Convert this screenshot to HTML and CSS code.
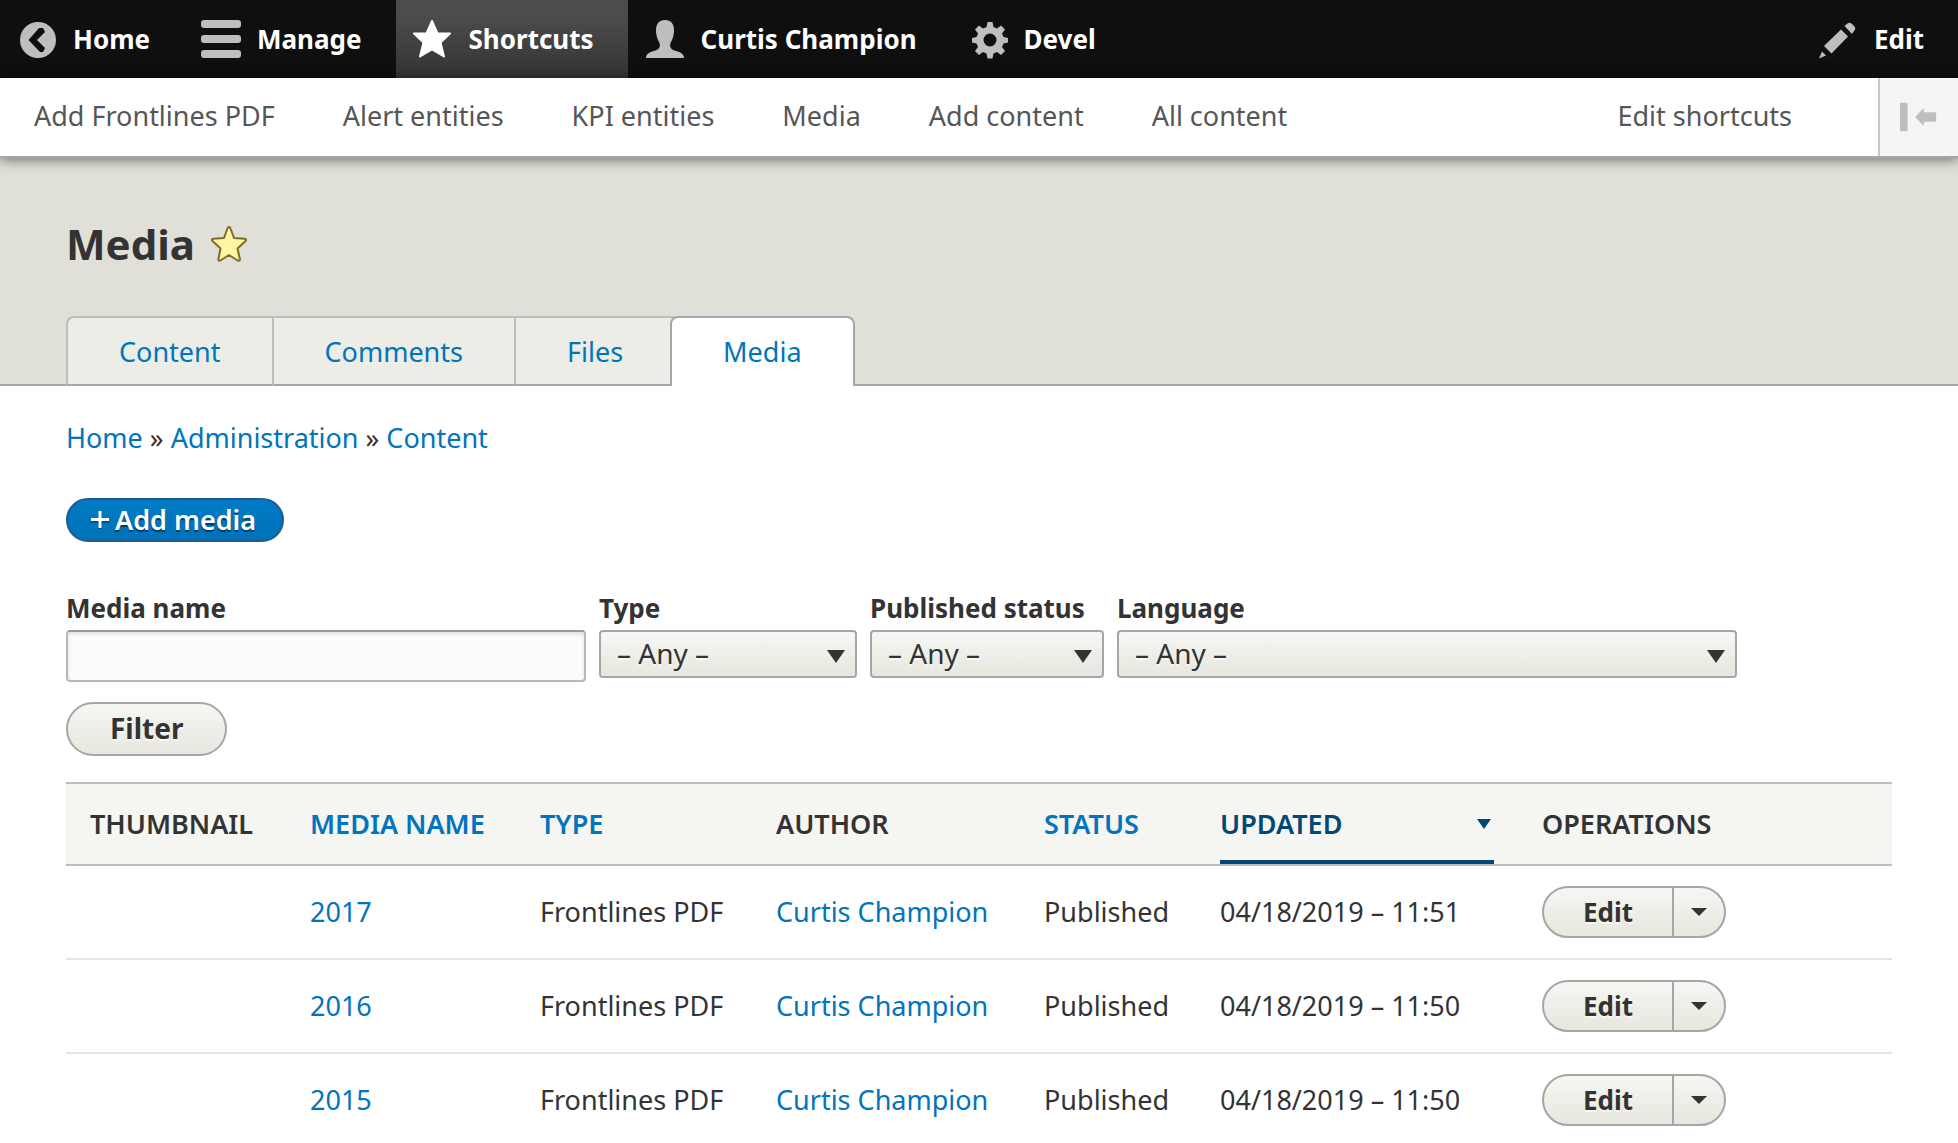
FILE: index.html
```html
<!DOCTYPE html>
<html lang="en">
<head>
<meta charset="utf-8">
<title>Media</title>
<meta name="viewport" content="width=device-width, initial-scale=1">
<link rel="stylesheet" href="styles.css">
</head>
<body>
<nav class="toolbar" aria-label="Administration toolbar">
  <a class="toolbar-tab" href="#">
    <svg class="toolbar-icon" viewBox="0 0 40 40" aria-hidden="true"><path fill="#bebebe" fill-rule="evenodd" d="M21 3a18 18 0 1 0 0 36 18 18 0 0 0 0-36zM22 9h4l2 4-8 8 8 8-2 4h-3L11.500 21z"/></svg>
    Home
  </a>
  <a class="toolbar-tab" href="#">
    <svg class="toolbar-icon" viewBox="0 0 40 40" aria-hidden="true"><g fill="#bebebe"><rect y="1" width="40" height="8" rx="3"/><rect y="16" width="40" height="8" rx="3"/><rect y="31" width="40" height="8" rx="3"/></g></svg>
    Manage
  </a>
  <a class="toolbar-tab is-active" href="#">
    <svg class="toolbar-icon" viewBox="0 0 40 40" aria-hidden="true"><path fill="#fff" stroke="#fff" stroke-width="2" stroke-linejoin="round" d="M19 2l5.500 12.500H37l-9.500 9L31 37.500l-12-7-12 7 3.500-14L1 14.500h12.500z"/></svg>
    Shortcuts
  </a>
  <a class="toolbar-tab" href="#">
    <svg class="toolbar-icon" viewBox="0 0 40 40" aria-hidden="true"><path fill="#bebebe" d="M20 1c6 0 9 4 9 10.500 0 5-1.500 9-3.500 12.500-1 3.500 0 6 4 7.500 5.500 1.500 9.500 3 9.500 7.500H1c0-4.500 4-6 9.500-7.500 4-1.500 5-4 4-7.500C12.500 20.500 11 16.500 11 11.500 11 5 14 1 20 1z"/></svg>
    Curtis Champion
  </a>
  <a class="toolbar-tab" href="#">
    <svg class="toolbar-icon" viewBox="0 0 40 40" aria-hidden="true"><path fill="#bebebe" fill-rule="evenodd" d="M19.500 3h5l1 5 3.500 1.500 4-3 4 4-3 4 1.500 3.500 4.500 1v4.500l-4.500 1L34 28l3 4-4 4-4-3-3.500 1.500-1 5h-5l-1-5L15 33l-4 3-4-4 3-4-1.500-3.500-4.500-1V19l4.500-1L10 14.500l-3-4 4-4 4 3L18.500 8zM22 14.500a6.500 6.500 0 1 0 0 13 6.500 6.500 0 0 0 0-13z"/></svg>
    Devel
  </a>
  <a class="toolbar-tab toolbar-edit" href="#">
    <svg class="toolbar-icon" viewBox="0 0 40 40" aria-hidden="true"><g fill="#bebebe" transform="translate(1 1)"><path d="M25.500 6l3-2.500c1.500-1 3-.8 4.500.5l2.500 2.500c1.200 1.500 1 3-.5 4.500L33 14z"/><path d="M22 9.500L29 16.500 12.500 33.500 5 26z"/><path d="M3 31.500l4 4L0 38.500z"/></g></svg>
    Edit
  </a>
</nav>
<nav class="tray" aria-label="Shortcuts">
  <a href="#">Add Frontlines PDF</a>
  <a href="#">Alert entities</a>
  <a href="#">KPI entities</a>
  <a href="#">Media</a>
  <a href="#">Add content</a>
  <a href="#">All content</a>
  <a class="tray-edit" href="#">Edit shortcuts</a>
  <button class="tray-toggle" type="button" aria-label="Vertical orientation">
    <svg viewBox="0 0 40 32" aria-hidden="true"><g fill="#bebebe"><rect y="1" width="8" height="30" rx="1"/><path d="M16 16l9-9.500V11h12q1 0 1 1v8q0 1-1 1H25v4.500z"/></g></svg>
  </button>
</nav>
<header class="page-header">
  <div class="title-row">
    <h1>Media</h1>
    <a class="star" href="#" aria-label="Remove from shortcuts"><svg viewBox="0 0 36 36" aria-hidden="true"><path fill="#fff6a3" stroke="#7f6c2b" stroke-width="2" stroke-linejoin="round" d="M18 1q1 0 1.500 1.500L23 12l11 .8q1.800.7.500 2.200L26.500 22.500l2.500 11q-.5 1.800-2.300 1L18 29l-8.700 5.500q-1.800.8-2-1L9.500 22.500 1.500 15q-1.300-1.500.5-2.200L13 12l3.500-9.500Q17 1 18 1z"/></svg></a>
  </div>
  <nav class="tabs" aria-label="Tabs">
    <a href="#">Content</a>
    <a href="#">Comments</a>
    <a href="#">Files</a>
    <a class="is-active" href="#">Media</a>
  </nav>
</header>
<main class="content">
  <nav class="breadcrumb" aria-label="Breadcrumb"><a href="#">Home</a> » <a href="#">Administration</a> » <a href="#">Content</a></nav>
  <a class="action" href="#"><svg viewBox="0 0 18 18" aria-hidden="true"><path d="M9 1v17M0 10h18" stroke="#000" stroke-opacity=".4" stroke-width="3"/><path d="M9 0v17M0 8.500h18" stroke="#fff" stroke-width="3"/></svg>Add media</a>
  <form class="filters">
    <div class="field field-name">
      <label for="name">Media name</label>
      <input id="name" type="text">
    </div>
    <div class="field field-type">
      <label for="type">Type</label>
      <select id="type"><option>– Any –</option></select>
    </div>
    <div class="field field-status">
      <label for="status">Published status</label>
      <select id="status"><option>– Any –</option></select>
    </div>
    <div class="field field-language">
      <label for="language">Language</label>
      <select id="language"><option>– Any –</option></select>
    </div>
    <button class="filter-button" type="button">Filter</button>
  </form>
  <table class="media-table">
    <colgroup><col class="col-thumb"><col class="col-name"><col class="col-type"><col class="col-author"><col class="col-status"><col class="col-updated"><col></colgroup>
    <thead>
      <tr>
        <th>Thumbnail</th>
        <th><a href="#">Media name</a></th>
        <th><a href="#">Type</a></th>
        <th>Author</th>
        <th><a href="#">Status</a></th>
        <th><a class="is-sorted" href="#">Updated<svg viewBox="0 0 14 10" aria-hidden="true"><path fill="#004875" d="M0 0h14L7 10z"/></svg></a></th>
        <th>Operations</th>
      </tr>
    </thead>
    <tbody>
      <tr>
        <td></td><td><a href="#">2017</a></td><td>Frontlines PDF</td><td><a href="#">Curtis Champion</a></td><td>Published</td><td>04/18/2019 – 11:51</td>
        <td><div class="dropbutton"><button type="button">Edit</button><button class="more" type="button" aria-label="More actions"><svg viewBox="0 0 16 8" aria-hidden="true"><path fill="#333" d="M0 0h16L8 8z"/></svg></button></div></td>
      </tr>
      <tr>
        <td></td><td><a href="#">2016</a></td><td>Frontlines PDF</td><td><a href="#">Curtis Champion</a></td><td>Published</td><td>04/18/2019 – 11:50</td>
        <td><div class="dropbutton"><button type="button">Edit</button><button class="more" type="button" aria-label="More actions"><svg viewBox="0 0 16 8" aria-hidden="true"><path fill="#333" d="M0 0h16L8 8z"/></svg></button></div></td>
      </tr>
      <tr>
        <td></td><td><a href="#">2015</a></td><td>Frontlines PDF</td><td><a href="#">Curtis Champion</a></td><td>Published</td><td>04/18/2019 – 11:50</td>
        <td><div class="dropbutton"><button type="button">Edit</button><button class="more" type="button" aria-label="More actions"><svg viewBox="0 0 16 8" aria-hidden="true"><path fill="#333" d="M0 0h16L8 8z"/></svg></button></div></td>
      </tr>
    </tbody>
  </table>
</main>
</body>
</html>
```
FILE: styles.css
```css
* {
  box-sizing: border-box;
}

body {
  margin: 0;
  background: #fff;
  color: #333;
  font: 27px/36px "Lucida Grande", "Noto Sans", sans-serif;
}

a {
  color: #0074bd;
  text-decoration: none;
}

button,
input,
select {
  font: inherit;
  color: inherit;
}

/* Toolbar */
.toolbar {
  display: flex;
  height: 78px;
  background: #0f0f0f;
}

.toolbar-tab {
  display: flex;
  align-items: center;
  gap: 16px;
  padding: 0 34px 0 17px;
  color: #fff;
  font-size: 26px;
  font-weight: 700;
  white-space: nowrap;
}

.toolbar-tab.is-active {
  background: linear-gradient(#4c4c4c 20%, #333);
}

.toolbar-icon {
  width: 40px;
  height: 40px;
}

.toolbar-edit {
  margin-left: auto;
}

/* Shortcut tray */
.tray {
  position: relative;
  display: flex;
  align-items: center;
  height: 80px;
  background: #fff;
  border-bottom: 2px solid #a6a6a6;
  box-shadow: 0 2px 12px rgba(0, 0, 0, 0.5);
}

.tray a {
  padding: 0 34px 2px;
  color: #565656;
  white-space: nowrap;
}

.tray .tray-edit {
  margin-left: auto;
  margin-right: 52px;
}

.tray-toggle {
  display: flex;
  align-items: center;
  align-self: stretch;
  width: 80px;
  padding: 0 20px;
  border: 0;
  border-left: 2px solid #c8c8c8;
  background: #f5f5f5;
}

.tray-toggle svg {
  width: 40px;
  height: 32px;
}

/* Page header */
.page-header {
  padding: 58px 66px 0;
  background: #e0e0d8;
  box-shadow: inset 0 -2px #a6a6a6;
}

.title-row {
  display: flex;
  align-items: center;
  gap: 16px;
}

h1 {
  margin: 0;
  font-size: 42px;
  line-height: 56px;
}

.star svg {
  display: block;
  width: 36px;
  height: 36px;
}

.tabs {
  display: flex;
  margin-top: 44px;
}

.tabs a {
  height: 70px;
  padding: 16px 51px;
  border: 2px solid #bebebe;
  border-right: 0;
  border-bottom-color: #a6a6a6;
  background: #ecede6;
}

.tabs a:first-child {
  border-top-left-radius: 8px;
}

.tabs .is-active {
  margin-left: -4px;
  border: 2px solid #a6a6a6;
  border-bottom: 0;
  border-radius: 8px 8px 0 0;
  background: #fff;
}

/* Content */
.content {
  padding: 34px 66px;
}

.action {
  display: inline-flex;
  align-items: center;
  gap: 6px;
  height: 44px;
  margin-top: 42px;
  padding: 0 26px 0 23px;
  border: 2px solid #1e5c90;
  border-radius: 22px;
  background: linear-gradient(#007bc6, #0071b8);
  color: #fff;
  font-weight: 600;
  text-shadow: 0 2px 1px rgba(0, 0, 0, 0.5);
}

.action svg {
  width: 18px;
  height: 18px;
}

.filters {
  display: flex;
  flex-wrap: wrap;
  align-items: flex-start;
  gap: 20px 13px;
  margin-top: 48px;
}

.field label {
  display: block;
  margin-bottom: 4px;
  font-size: 26px;
  font-weight: 700;
  white-space: nowrap;
}

.field input,
.field select {
  display: block;
  width: 100%;
  border-radius: 4px;
}

.field input {
  height: 52px;
  padding: 0 12px;
  border: 2px solid #b8b8b8;
  border-top-color: #999;
  background: #fcfcfa;
  box-shadow: inset 0 2px 4px rgba(0, 0, 0, 0.12);
}

.field select {
  height: 48px;
  padding: 0 16px 2px;
  border: 2px solid #a6a6a6;
  appearance: none;
  background:
    url("data:image/svg+xml,%3Csvg xmlns='http://www.w3.org/2000/svg' width='18' height='13'%3E%3Cpath fill='%23333' d='M0 0h18L9 13z'/%3E%3C/svg%3E") right 10px top 18px no-repeat,
    linear-gradient(#f6f6f3, #e7e7df);
  font-size: 28px;
  text-shadow: 0 2px rgba(255, 255, 255, 0.6);
}

.field-name {
  width: 520px;
}

.field-type {
  width: 258px;
}

.field-status {
  width: 234px;
}

.field-language {
  width: 620px;
}

.filter-button {
  height: 54px;
  padding: 0 42px 2px;
  border: 2px solid #a6a6a6;
  border-radius: 27px;
  background: linear-gradient(#f6f6f3, #e7e7df);
  font-size: 28px;
  font-weight: 700;
  text-shadow: 0 2px rgba(255, 255, 255, 0.6);
}

/* Table */
.media-table {
  width: 100%;
  margin-top: 26px;
  border-collapse: separate;
  border-spacing: 0;
  table-layout: fixed;
}

.col-thumb {
  width: 220px;
}

.col-name {
  width: 230px;
}

.col-type {
  width: 236px;
}

.col-author {
  width: 268px;
}

.col-status {
  width: 176px;
}

.col-updated {
  width: 322px;
}

.media-table th,
.media-table td {
  padding: 0 24px;
  text-align: left;
  white-space: nowrap;
}

.media-table th {
  height: 84px;
  border: solid #bfbfba;
  border-width: 2px 0;
  background: #f5f5f2;
  font-weight: 600;
  text-transform: uppercase;
}

.media-table td {
  height: 94px;
  border-bottom: 2px solid #e6e4df;
}

.is-sorted {
  display: flex;
  align-items: center;
  justify-content: space-between;
  height: 80px;
  padding: 4px 3px 0 0;
  border-bottom: 4px solid #004875;
  color: #004875;
}

.is-sorted svg {
  width: 14px;
  height: 10px;
}

.dropbutton {
  display: inline-flex;
  height: 52px;
  border: 2px solid #a6a6a6;
  border-radius: 26px;
  background: linear-gradient(#f6f6f3, #e7e7df);
  vertical-align: middle;
  overflow: hidden;
}

.dropbutton button {
  width: 128px;
  padding: 0;
  border: 0;
  background: none;
  font-size: 26px;
  font-weight: 700;
  text-shadow: 0 2px rgba(255, 255, 255, 0.6);
}

.dropbutton .more {
  display: flex;
  align-items: center;
  justify-content: center;
  width: 52px;
  border-left: 2px solid #a6a6a6;
}

.more svg {
  width: 16px;
  height: 8px;
}
```
